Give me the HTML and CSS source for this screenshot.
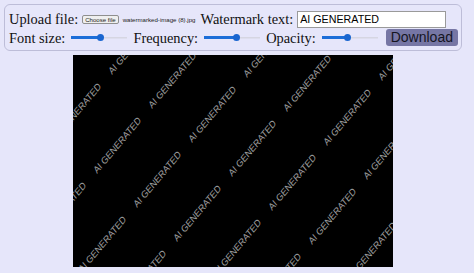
FILE: index.html
```html
<!DOCTYPE html>
<html lang="en">
<head>
  <meta charset="UTF-8">
  <title>Watermark Tool</title>
  <link rel="stylesheet" href="styles.css">
</head>
<body>

  <div class="app">
    <div class="controls">
      <div class="row row-top">
        <label>Upload file:</label>
        <span class="file">
          <span class="file-btn">Choose file</span>
          <span class="file-name">watermarked-image (8).jpg</span>
        </span>
        <label>Watermark text:</label>
        <input class="text-input" type="text" value="AI GENERATED">
      </div>
      <div class="row row-bottom">
        <label>Font size:</label>
        <input class="slider" type="range" min="0" max="100" value="52" style="--fill: 52%">
        <label>Frequency:</label>
        <input class="slider" type="range" min="0" max="100" value="58" style="--fill: 57%">
        <label>Opacity:</label>
        <input class="slider" type="range" min="0" max="100" value="46" style="--fill: 46%">
        <button class="download">Download</button>
      </div>
    </div>

    <svg class="preview" width="320" height="212" viewBox="0 0 320 212">
      <rect width="320" height="212" fill="#000"/>
      <g class="marks">
        <text transform="translate(39 20) scale(1 1.18) rotate(-45)">AI GENERATED</text>
        <text transform="translate(174 23) scale(1 1.18) rotate(-45)">AI GENERATED</text>
        <text transform="translate(309 26) scale(1 1.18) rotate(-45)">AI GENERATED</text>
        <text transform="translate(79 54) scale(1 1.18) rotate(-45)">AI GENERATED</text>
        <text transform="translate(214 57) scale(1 1.18) rotate(-45)">AI GENERATED</text>
        <text transform="translate(-16 85) scale(1 1.18) rotate(-45)">AI GENERATED</text>
        <text transform="translate(119 88) scale(1 1.18) rotate(-45)">AI GENERATED</text>
        <text transform="translate(254 91) scale(1 1.18) rotate(-45)">AI GENERATED</text>
        <text transform="translate(24 119) scale(1 1.18) rotate(-45)">AI GENERATED</text>
        <text transform="translate(159 122) scale(1 1.18) rotate(-45)">AI GENERATED</text>
        <text transform="translate(294 125) scale(1 1.18) rotate(-45)">AI GENERATED</text>
        <text transform="translate(64 153) scale(1 1.18) rotate(-45)">AI GENERATED</text>
        <text transform="translate(199 156) scale(1 1.18) rotate(-45)">AI GENERATED</text>
        <text transform="translate(-31 184) scale(1 1.18) rotate(-45)">AI GENERATED</text>
        <text transform="translate(104 187) scale(1 1.18) rotate(-45)">AI GENERATED</text>
        <text transform="translate(239 190) scale(1 1.18) rotate(-45)">AI GENERATED</text>
        <text transform="translate(9 218) scale(1 1.18) rotate(-45)">AI GENERATED</text>
        <text transform="translate(144 221) scale(1 1.18) rotate(-45)">AI GENERATED</text>
        <text transform="translate(279 224) scale(1 1.18) rotate(-45)">AI GENERATED</text>
        <text transform="translate(49 252) scale(1 1.18) rotate(-45)">AI GENERATED</text>
        <text transform="translate(184 255) scale(1 1.18) rotate(-45)">AI GENERATED</text>
      </g>
    </svg>
  </div>

</body>
</html>
```

FILE: styles.css
```css
body {
  margin: 4px;
  background: #e6e6fa;
  color: #111;
  font-family: "Liberation Serif", "Times New Roman", serif;
  font-size: 14.4px;
}

.app {
  width: 458px;
  display: flex;
  flex-direction: column;
  align-items: center;
  gap: 4px;
}

.controls {
  width: 100%;
  box-sizing: border-box;
  border: 1px solid #bdbdd8;
  border-radius: 6px;
  padding: 5px 4px 3px 4px;
}

.row {
  display: flex;
  align-items: center;
  white-space: nowrap;
}

.row-top {
  height: 18px;
  gap: 4px;
}

.row-bottom {
  height: 19px;
  gap: 5px;
}

label {
  line-height: 16px;
}

.file {
  display: flex;
  align-items: center;
  gap: 4px;
  font-family: "Liberation Sans", Arial, sans-serif;
  font-size: 6.1px;
  margin-right: 1px;
}

.file-btn {
  display: inline-block;
  height: 9px;
  line-height: 8px;
  box-sizing: border-box;
  padding: 0 2px;
  background: #efefef;
  border: 1px solid #8f8f8f;
  border-radius: 2px;
  color: #222;
}

.file-name {
  color: #222;
}

.text-input {
  width: 149px;
  height: 17px;
  box-sizing: border-box;
  margin: 0;
  padding: 0 2px;
  border: 1px solid #9a9a9a;
  background: #fff;
  font-family: "Liberation Sans", Arial, sans-serif;
  font-size: 10.7px;
  color: #000;
}

.slider {
  -webkit-appearance: none;
  appearance: none;
  width: 56px;
  height: 8px;
  margin: 0 1px;
  padding: 0;
  background: transparent;
}

.slider::-webkit-slider-runnable-track {
  height: 8px;
  background:
    linear-gradient(#1c6ed8, #1c6ed8) left center / var(--fill) 3px no-repeat,
    linear-gradient(#d6d6e2, #d6d6e2) center / 100% 1.5px no-repeat;
}

.slider::-webkit-slider-thumb {
  -webkit-appearance: none;
  width: 7px;
  height: 7px;
  margin-top: 0.5px;
  border-radius: 50%;
  background: #1a66d0;
  border: none;
}

.download {
  margin-left: 2px;
  height: 17px;
  padding: 0 5px;
  border: none;
  border-radius: 3px;
  background: #7676a4;
  color: #15151f;
  font-family: "Liberation Sans", Arial, sans-serif;
  font-size: 14px;
  line-height: 17px;
  cursor: pointer;
}

.preview {
  display: block;
  margin-left: -1px;
}

.marks text {
  font-family: "Liberation Sans", Arial, sans-serif;
  font-size: 8.6px;
  fill: rgba(255, 255, 255, 0.62);
}
```
